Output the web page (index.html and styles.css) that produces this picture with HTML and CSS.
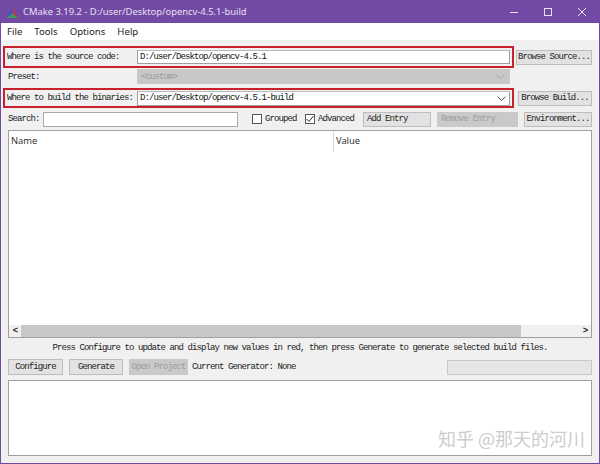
FILE: index.html
```html
<!DOCTYPE html>
<html lang="en">
<head>
<meta charset="utf-8">
<title>CMake</title>
<link rel="stylesheet" href="styles.css">
</head>
<body>
<div class="window">
  <header class="titlebar">
    <svg class="logo" width="13" height="14" viewBox="0 0 13 14"><polygon points="6.5,1.5 1,13 5.5,9.5" fill="#2f5fb8"/><polygon points="6.5,1.5 12,13 7.5,9.5" fill="#c8323c"/><polygon points="1,13 12,13 6.5,8.5" fill="#3f9a5a"/></svg>
    <span class="title">CMake 3.19.2 - D:/user/Desktop/opencv-4.5.1-build</span>
    <div class="winbtns">
      <svg width="10" height="10" viewBox="0 0 10 10"><path d="M1 5.5H9" stroke="#e8e2f2" stroke-width="1" fill="none"/></svg>
      <svg width="10" height="10" viewBox="0 0 10 10"><rect x="1.5" y="1.5" width="7" height="7" stroke="#e8e2f2" stroke-width="1" fill="none"/></svg>
      <svg width="10" height="10" viewBox="0 0 10 10"><path d="M1 1L9 9M9 1L1 9" stroke="#e8e2f2" stroke-width="1" fill="none"/></svg>
    </div>
  </header>
  <nav class="menubar"><span>File</span><span>Tools</span><span>Options</span><span>Help</span></nav>
  <main class="content">
    <div class="row row-source">
      <div class="redbox box-source">
        <label class="lbl lbl-wide">Where is the source code:</label>
        <div class="field">D:/user/Desktop/opencv-4.5.1</div>
      </div>
      <button class="btn btn-source">Browse Source...</button>
    </div>
    <div class="row row-preset">
      <label class="lbl lbl-preset">Preset:</label>
      <div class="combo-off"><span>&lt;custom&gt;</span><svg width="9" height="5" viewBox="0 0 9 5"><path d="M0.5 0.5L4.5 4.5L8.5 0.5" stroke="#a8a8a8" fill="none"/></svg></div>
    </div>
    <div class="row row-build">
      <div class="redbox box-build">
        <label class="lbl lbl-wide">Where to build the binaries:</label>
        <div class="field field-combo"><span>D:/user/Desktop/opencv-4.5.1-build</span><svg width="9" height="5" viewBox="0 0 9 5"><path d="M0.5 0.5L4.5 4.5L8.5 0.5" stroke="#555" fill="none"/></svg></div>
      </div>
      <button class="btn btn-build">Browse Build...</button>
    </div>
    <div class="row row-search">
      <label class="lbl lbl-search">Search:</label>
      <div class="search"></div>
      <span class="check check-grouped"><i class="box"></i>Grouped</span>
      <span class="check check-adv"><i class="box"><svg width="10" height="10" viewBox="0 0 10 10"><path d="M1.5 5L4 7.5L8.5 2" stroke="#333" fill="none"/></svg></i>Advanced</span>
      <button class="btn btn-add">Add Entry</button>
      <button class="btn btn-off btn-remove">Remove Entry</button>
      <button class="btn btn-env">Environment...</button>
    </div>
    <section class="table">
      <div class="thead"><div class="th th-name">Name</div><div class="th">Value</div></div>
      <div class="tbody"></div>
      <div class="hscroll"><span class="arrow">&lt;</span><div class="track"><div class="thumb"></div></div><span class="arrow">&gt;</span></div>
    </section>
    <p class="msg">Press Configure to update and display new values in red, then press Generate to generate selected build files.</p>
    <div class="row row-actions">
      <button class="btn btn-config">Configure</button>
      <button class="btn btn-gen">Generate</button>
      <button class="btn btn-off btn-open">Open Project</button>
      <span class="generator">Current Generator: None</span>
      <div class="progress"></div>
    </div>
    <section class="output"><div class="watermark">知乎 @那天的河川</div></section>
  </main>
</div>
</body>
</html>
```
FILE: styles.css
```css
* { box-sizing: border-box; }
html, body { margin: 0; padding: 0; }
body { width: 600px; height: 464px; overflow: hidden; background: #f0f0f0; }
.window { width: 600px; height: 464px; display: flex; flex-direction: column; border: 1px solid #7349a6; border-top: 0; font-family: "Liberation Mono", monospace; font-size: 9px; letter-spacing: -0.9px; color: #222; }
.titlebar { height: 23px; flex: none; margin: 0 -1px; background: #7349a6; display: flex; align-items: center; padding-left: 6px; color: #e6e0f0; letter-spacing: 0; }
.logo { flex: none; }
.title { margin-left: 4px; font: 9.4px "Noto Sans", sans-serif; }
.winbtns { margin-left: auto; display: flex; gap: 24px; padding-right: 13px; }
.menubar { height: 17px; flex: none; background: #fff; display: flex; align-items: center; gap: 12px; padding-left: 6px; font: 9.6px "Noto Sans", sans-serif; color: #222; letter-spacing: 0; }
.content { flex: 1; padding: 0 7px; display: flex; flex-direction: column; position: relative; }
.row { display: flex; align-items: center; }
.row-source { height: 22px; margin: 6px -4px 0 -5px; }
.row-preset { height: 15px; margin-top: 1px; }
.row-build { height: 20px; margin: 4px -4px 0 -5px; }
.row-search { height: 16px; margin-top: 3px; }
.redbox { border: 2px solid #c8202c; display: flex; align-items: center; height: 100%; padding-right: 2px; }
.box-source { width: 511px; }
.box-build { width: 511px; }
.lbl { flex: none; white-space: nowrap; }
.lbl-wide { width: 132px; padding-left: 2px; }
.lbl-preset { width: 129px; }
.lbl-search { width: 35px; }
.field { flex: 1; height: 14px; background: #fff; border: 1px solid #a0a0a0; border-top-color: #bbb; padding-left: 2px; line-height: 12px; display: flex; align-items: center; justify-content: space-between; color: #111; }
.box-build .field { height: 15px; }
.field svg { margin-right: 3px; }
.combo-off { width: 373px; height: 15px; background: #c8c8c8; display: flex; align-items: center; justify-content: space-between; padding: 0 5px 0 4px; color: #999; }
.btn { flex: none; font: inherit; letter-spacing: inherit; color: #222; background: #e2e2e2; border: 1px solid #bdbdbd; height: 15px; padding: 0; }
.btn-off { background: #c9c9c9; border-color: #c9c9c9; color: #9c9c9c; }
.btn-source { width: 76px; margin-left: 2px; }
.btn-build { width: 74px; margin-left: 4px; }
.search { width: 195px; height: 15px; background: #fff; border: 1px solid #a8a8a8; }
.check { display: flex; align-items: center; flex: none; }
.box { width: 10px; height: 10px; border: 1px solid #555; background: #fff; margin-right: 3px; display: flex; align-items: center; justify-content: center; }
.box svg { flex: none; }
.check-grouped { margin-left: 14px; width: 53px; }
.check-adv { width: 58px; }
.btn-add { width: 68px; text-align: left; padding-left: 3px; }
.btn-remove { width: 81px; margin-left: 6px; text-align: left; padding-left: 3px; }
.btn-env { width: 68px; margin-left: 6px; }
.table { height: 208px; flex: none; margin-top: 3px; background: #fff; border: 1px solid #a0a0a0; display: flex; flex-direction: column; }
.thead { height: 21px; flex: none; display: flex; font: 9.3px "Noto Sans", sans-serif; letter-spacing: 0; color: #333; }
.th { padding-left: 2px; line-height: 20px; }
.th-name { width: 325px; border-right: 1px solid #d8d8d8; }
.tbody { flex: 1; }
.hscroll { height: 12px; flex: none; display: flex; align-items: center; background: #f0f0f0; font-weight: bold; }
.arrow { width: 12px; text-align: center; flex: none; }
.track { flex: 1; height: 12px; }
.thumb { width: 500px; height: 12px; background: #c8c8c8; }
.msg { margin: 0; height: 21px; line-height: 20px; text-align: center; white-space: nowrap; }
.row-actions { height: 16px; }
.btn-config { width: 55px; height: 16px; }
.btn-gen { width: 54px; height: 16px; margin-left: 6px; }
.btn-open { width: 59px; height: 16px; margin-left: 6px; }
.generator { margin-left: 4px; }
.progress { margin-left: auto; width: 145px; height: 15px; background: #e6e6e6; border: 1px solid #c8c8c8; }
.output { height: 76px; flex: none; margin-top: 5px; background: #fff; border: 1px solid #a0a0a0; position: relative; }
.watermark { position: absolute; right: 6px; bottom: 4px; font: 18px "Noto Sans CJK SC", sans-serif; letter-spacing: 0; color: #cdcdcd; white-space: nowrap; }
```
